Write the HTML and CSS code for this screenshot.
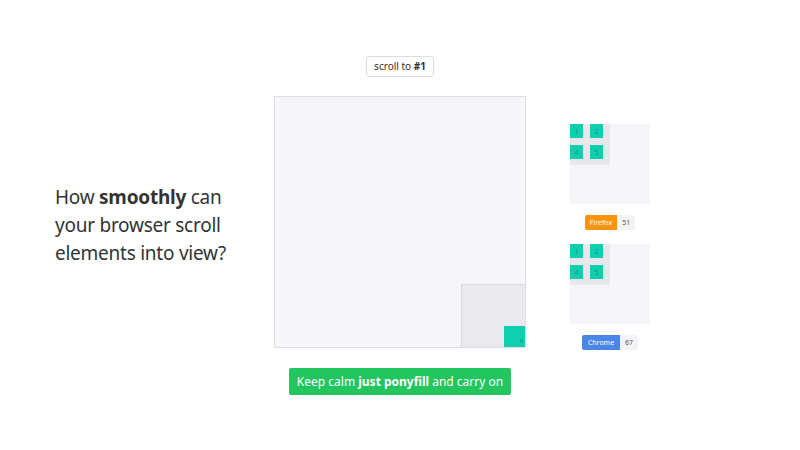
FILE: index.html
```html
<!DOCTYPE html>
<html>
<head>
<meta charset="utf-8">
<link rel="stylesheet" href="styles.css">
</head>
<body>
<div class="page">
  <div class="intro">
    <h1 class="title">How <b>smoothly</b> can your browser scroll elements into view?</h1>
  </div>
  <div class="stage">
    <button class="scroll-btn">scroll to <b>#1</b></button>
    <div class="viewport">
      <div class="corner">
        <div class="tile-big"><span>6</span></div>
      </div>
    </div>
    <button class="cta">Keep calm <b>just ponyfill</b> and carry on</button>
  </div>
  <div class="results">
    <div class="result">
      <div class="thumb">
        <div class="mini">
          <div class="cell">1</div><div class="cell">2</div>
          <div class="cell">4</div><div class="cell">5</div>
        </div>
      </div>
      <div class="badge"><span class="name firefox">Firefox</span><span class="ver">51</span></div>
    </div>
    <div class="result">
      <div class="thumb">
        <div class="mini">
          <div class="cell">1</div><div class="cell">2</div>
          <div class="cell">4</div><div class="cell">5</div>
        </div>
      </div>
      <div class="badge"><span class="name chrome">Chrome</span><span class="ver">67</span></div>
    </div>
  </div>
</div>
</body>
</html>
```

FILE: styles.css
```css
* { box-sizing: border-box; }
html, body { margin: 0; padding: 0; background: #fff; }
body { font-family: "Noto Sans", "Open Sans", sans-serif; color: #333; }
.page {
  height: 450px;
  display: flex;
  align-items: center;
  padding-left: 55px;
}
.intro { width: 219px; }
.title {
  margin: 0;
  font-size: 19px;
  letter-spacing: -0.25px;
  font-weight: 400;
  line-height: 28px;
  width: 190px;
  color: #333;
}
.title b { font-weight: 700; }
.stage {
  width: 252px;
  display: flex;
  flex-direction: column;
  align-items: center;
}
.scroll-btn {
  font-family: inherit;
  font-size: 10px;
  color: #333;
  background: #fff;
  border: 1px solid #dcdcdc;
  border-radius: 3px;
  height: 21px;
  padding: 0 7px;
  margin-bottom: 19px;
}
.viewport {
  width: 252px;
  height: 252px;
  background: #f5f5fa;
  border: 1px solid #dedee2;
  display: flex;
  justify-content: flex-end;
  align-items: flex-end;
  overflow: hidden;
}
.corner {
  width: 64px;
  height: 63px;
  background: #e9e9ee;
  border-top: 1px solid #d8d8de;
  border-left: 1px solid #d8d8de;
  display: flex;
  justify-content: flex-end;
  align-items: flex-end;
}
.tile-big {
  width: 21px;
  height: 21px;
  background: #10cfae;
  position: relative;
  overflow: hidden;
}
.tile-big span {
  position: absolute;
  right: 1px;
  bottom: 3px;
  width: 4px;
  height: 5px;
  font-size: 5px;
  line-height: 5px;
  overflow: hidden;
  color: #0a8c76;
}
.cta {
  margin-top: 20px;
  font-family: inherit;
  font-size: 12px;
  color: #fff;
  background: #22c55e;
  border: none;
  border-radius: 2px;
  height: 27px;
  width: 222px;
  padding: 0;
}
.results {
  margin-left: 44px;
  margin-top: 24px;
  display: flex;
  flex-direction: column;
  gap: 14px;
}
.result {
  display: flex;
  flex-direction: column;
  align-items: center;
}
.thumb {
  width: 80px;
  height: 80px;
  background: #f5f5fa;
  align-self: stretch;
}
.mini {
  width: 40px;
  height: 41px;
  background: #e8e8ec;
  display: grid;
  grid-template-columns: 13px 13px;
  grid-template-rows: 14px 14px;
  column-gap: 7px;
  row-gap: 7px;
}
.cell {
  background: #10cfae;
  font-size: 7px;
  color: #0b9d85;
  display: flex;
  align-items: center;
  justify-content: center;
}
.badge {
  margin-top: 11px;
  display: flex;
  height: 15px;
  font-size: 7px;
  line-height: 15px;
}
.name {
  color: #fff;
  padding: 0 5px;
  border-radius: 2px 0 0 2px;
}
.firefox { background: #f7930e; }
.chrome { background: #4a86e8; padding: 0 6px; }
.ver {
  background: #f3f3f5;
  color: #555;
  padding: 0 5px;
  border-radius: 0 2px 2px 0;
}
```
